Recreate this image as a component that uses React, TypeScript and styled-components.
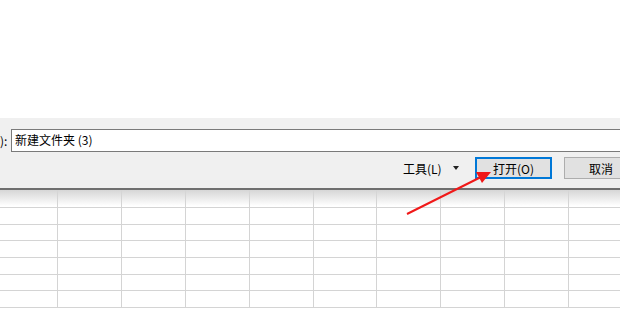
import React from 'react';
import styled, { createGlobalStyle } from 'styled-components';

const GlobalStyle = createGlobalStyle`
  html, body {
    margin: 0;
    padding: 0;
    background: #ffffff;
    overflow: hidden;
  }
  body {
    font-family: "Noto Sans CJK SC", "Noto Sans", sans-serif;
  }
`;

// Whole screenshot area
const Page = styled.div`
  position: relative;
  width: 620px;
  height: 309px;
  overflow: hidden;
  background: #ffffff;
`;

const TopBlank = styled.div`
  height: 118px;
  background: #ffffff;
`;

// Bottom part of the file dialog
const Dialog = styled.div`
  height: 72px;
  background: #f0f0f0;
  border-bottom: 2px solid #6f6f6f;
  display: flex;
  flex-direction: column;
  padding-top: 11px;
  box-sizing: border-box;
`;

const NameRow = styled.div`
  display: flex;
  align-items: center;
  height: 23px;
`;

const Label = styled.span`
  width: 9px;
  font-size: 12px;
  color: #000;
  line-height: 23px;
  white-space: nowrap;
`;

const NameInput = styled.div`
  flex: 1;
  height: 23px;
  box-sizing: border-box;
  border: 1px solid #7a7a7a;
  border-right: none;
  background: #ffffff;
  font-size: 12px;
  line-height: 20px;
  padding-left: 3px;
  color: #000;
  margin-left: 2px;
`;

const ButtonRow = styled.div`
  display: flex;
  align-items: center;
  margin-top: 5px;
  height: 22px;
  padding-left: 403px;

  & > * {
    flex-shrink: 0;
  }
`;

const ToolsLabel = styled.span`
  font-size: 12px;
  color: #000;
  width: 50px;
  white-space: nowrap;
`;

const DropArrow = styled.span`
  width: 0;
  height: 0;
  border-left: 3.5px solid transparent;
  border-right: 3.5px solid transparent;
  border-top: 4px solid #222;
  margin-right: 16px;
`;

const DialogButton = styled.div<{ $primary?: boolean }>`
  height: 22px;
  box-sizing: border-box;
  width: ${({ $primary }) => ($primary ? '77px' : '70px')};
  border: 1px solid ${({ $primary }) => ($primary ? '#0078d7' : '#adadad')};
  box-shadow: ${({ $primary }) => ($primary ? 'inset 0 0 0 1px #0078d7' : 'none')};
  background: #e1e1e1;
  font-size: 12px;
  color: #000;
  display: flex;
  align-items: center;
  justify-content: center;
  margin-right: 12px;
  white-space: nowrap;
  padding-left: ${({ $primary }) => ($primary ? '0' : '4px')};
`;

// Spreadsheet behind the dialog
const Sheet = styled.div`
  position: relative;
  display: grid;
  grid-template-columns: 58px repeat(9, 63.9px);
  grid-template-rows: 18px repeat(6, 16.67px);

  &::before {
    content: '';
    position: absolute;
    left: 0;
    right: 0;
    top: 0;
    height: 16px;
    background: linear-gradient(#d6d6d6, rgba(255, 255, 255, 0));
    pointer-events: none;
  }
`;

const Cell = styled.div`
  box-sizing: border-box;
  border-right: 1px solid #d4d4d4;
  border-bottom: 1px solid #d4d4d4;
`;

const ArrowLayer = styled.svg`
  position: absolute;
  left: 0;
  top: 0;
  pointer-events: none;
`;

export default function App() {
  const cells = Array.from({ length: 70 });
  return (
    <>
      <GlobalStyle />
      <Page>
        <TopBlank />
        <Dialog>
          <NameRow>
            <Label>):</Label>
            <NameInput>新建文件夹 (3)</NameInput>
          </NameRow>
          <ButtonRow>
            <ToolsLabel>工具(L)</ToolsLabel>
            <DropArrow />
            <DialogButton $primary>打开(O)</DialogButton>
            <DialogButton>取消</DialogButton>
          </ButtonRow>
        </Dialog>
        <Sheet>
          {cells.map((_, i) => (
            <Cell key={i} />
          ))}
        </Sheet>
        <ArrowLayer width="620" height="309" viewBox="0 0 620 309">
          <line x1="407" y1="214" x2="481" y2="177" stroke="#f01818" strokeWidth="2" />
          <polygon points="491,172 476,172 482,183" fill="#f01818" />
        </ArrowLayer>
      </Page>
    </>
  );
}
